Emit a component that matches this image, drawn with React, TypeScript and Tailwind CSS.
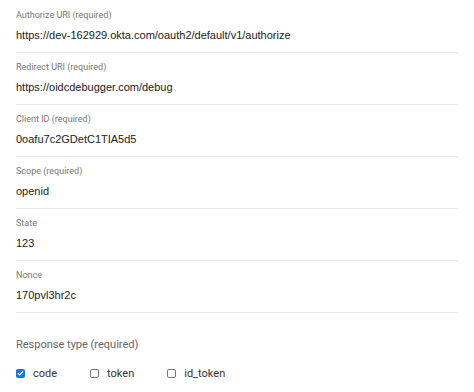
import { Check } from 'lucide-react'

const fields = [
  { label: 'Authorize URI (required)', value: 'https://dev-162929.okta.com/oauth2/default/v1/authorize' },
  { label: 'Redirect URI (required)', value: 'https://oidcdebugger.com/debug' },
  { label: 'Client ID (required)', value: '0oafu7c2GDetC1TIA5d5' },
  { label: 'Scope (required)', value: 'openid' },
  { label: 'State', value: '123' },
  { label: 'Nonce', value: '170pvl3hr2c' },
]

function Field({ label, value }: { label: string; value: string }) {
  return (
    <div className="border-b-[1.5px] border-[#e6e6e6] pt-[8.5px] pb-[10.5px]">
      <div className="text-[9px] leading-[11px] text-[#777]" style={{ fontFamily: 'Roboto, sans-serif' }}>
        {label}
      </div>
      <div className="mt-[8px] text-[11px] leading-[13px] text-[#222]" style={{ fontFamily: "'Liberation Sans', Arial, sans-serif" }}>
        {value}
      </div>
    </div>
  )
}

function Box({ checked, label }: { checked?: boolean; label: string }) {
  return (
    <label className="flex items-center gap-[8px]">
      {checked ? (
        <span className="flex h-[9px] w-[9px] items-center justify-center rounded-[2px] bg-[#1a73e8]">
          <Check size={7} strokeWidth={4} color="#fff" />
        </span>
      ) : (
        <span className="h-[9px] w-[9px] rounded-[2px] border border-[#777] bg-white" />
      )}
      <span>{label}</span>
    </label>
  )
}

export default function App() {
  return (
    <div className="min-h-[392px] w-[474px] bg-white pl-[16px] pr-[16px] pt-[1px]">
      {fields.map(f => (
        <Field key={f.label} label={f.label} value={f.value} />
      ))}

      <div className="mt-[25px] text-[11px] leading-[13px] text-[#666]" style={{ fontFamily: 'Roboto, sans-serif' }}>
        Response type (required)
      </div>
      <div className="mt-[16px] flex gap-[33px] text-[11px] leading-[13px] text-[#333]" style={{ fontFamily: 'Roboto, sans-serif' }}>
        <Box checked label="code" />
        <Box label="token" />
        <Box label="id_token" />
      </div>
    </div>
  )
}
